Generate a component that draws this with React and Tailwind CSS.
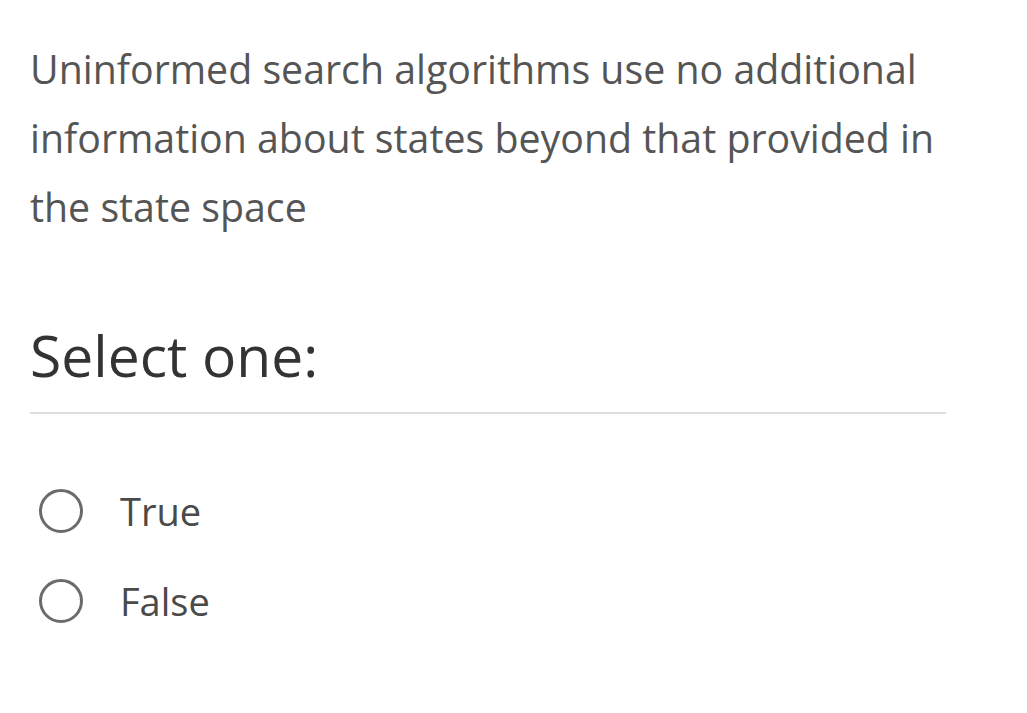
import React from "react";

function Radio({ label }) {
  return (
    <label className="flex items-center h-[90px]">
      <span className="w-[44px] h-[44px] rounded-full border-[3px] border-[#6b6b6b] ml-[39px] shrink-0" />
      <span className="ml-[37px] text-[38px] text-[#4a4a4a]">{label}</span>
    </label>
  );
}

export default function App() {
  return (
    <div className="bg-white min-h-[713px] w-[1027px] pl-[30px] pt-[35px]" style={{ fontFamily: '"Open Sans", sans-serif' }}>
      <p className="text-[39.3px] leading-[69px] text-[#555555] w-[940px]">
        Uninformed search algorithms use no additional information about states beyond that provided in the state space
      </p>
      <h2 className="mt-[78px] text-[57px] leading-[70px] text-[#333333]">Select one:</h2>
      <div className="mt-[22px] w-[916px] h-[2px] bg-[#dddddd]" />
      <div className="mt-[52px] -ml-[30px]">
        <Radio label="True" />
        <Radio label="False" />
      </div>
    </div>
  );
}
